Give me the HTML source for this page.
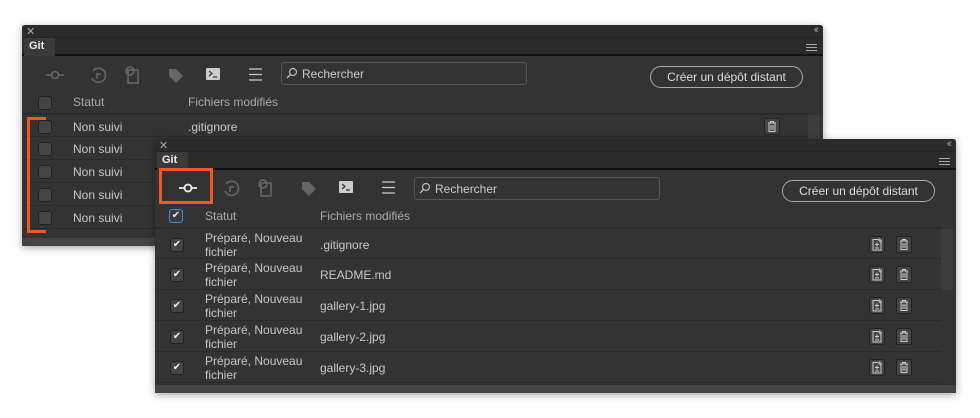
<!DOCTYPE html>
<html><head><meta charset="utf-8"><style>
*{margin:0;padding:0;box-sizing:border-box}
body{width:980px;height:418px;background:#fff;position:relative;overflow:hidden;font-family:"Liberation Sans",sans-serif;color:#c8c8c8;font-size:12px}
.p{position:absolute;background:#333;box-shadow:0 2px 8px rgba(0,0,0,.35);border-radius:3px 3px 0 0;overflow:hidden}
.a{position:absolute}
.tb{left:0;right:0;top:0;height:13px;background:#2b2b2b;border-bottom:1px solid #242424}
.tabrow{left:0;right:0;top:13px;height:18px;background:#2b2b2b;border-bottom:2px solid #111}
.tab{left:2px;top:0;width:31px;height:18px;background:#3a3a3a;color:#eee;font-weight:bold;font-size:11px;padding:2px 0 0 5px}
.x{left:4px;top:0;font-size:11px;color:#aaa}
.cc{right:6px;top:0;font-size:11px;line-height:11px;color:#999;letter-spacing:-2px}
.hm{right:6px;width:11px;height:7px;border-top:1px solid #aaa;border-bottom:1px solid #aaa}
.hm:after{content:"";position:absolute;left:0;right:0;top:2px;height:1px;background:#aaa}
.srch{border:1px solid #555;border-radius:3px;height:23px;font-size:12px;padding:4px 0 0 20px;color:#ccc}
.btn{border:1px solid #aaa;border-radius:12px;height:22px;font-size:12px;color:#ddd;text-align:center;padding-top:3px}
.cb{width:14px;height:14px;background:#444;border:1px solid #222;border-radius:3px;color:#eee;font-size:10px;line-height:12px;text-align:center}
.row{left:0;border-bottom:1px solid #2a2a2a}
.hd{color:#aaa}
.ic{width:16px;height:17px}
.or{position:absolute;background:#f05a22}
</style></head><body>

<svg width="0" height="0" style="position:absolute">
 <defs>
  <g id="trash"><rect x="0.5" y="0.5" width="15" height="16" rx="2" fill="#444" stroke="#222"/><g stroke="#ccc" stroke-width="1" fill="none"><path d="M4 5 h8 M6.5 5 V3.5 h3 V5 M5 5 v8.5 h6 V5 M7 7 v5 M9 7 v5"/></g></g>
  <g id="file"><rect x="0.5" y="0.5" width="15" height="16" rx="2" fill="#444" stroke="#222"/><g stroke="#ccc" stroke-width="1" fill="none"><path d="M4 3.5 h5 l3 3 V14 H4 Z M10 2.5 l3 3"/><path d="M8 6.5 v4 M6 8.5 h4 M6 12 h4"/></g></g>
 </defs>
</svg>

<!-- Panel 1 -->
<div class="p" style="left:22px;top:25px;width:801px;height:221px">
 <div class="a tb"><span class="a x">✕</span><span class="a cc">‹‹</span></div>
 <div class="a tabrow"><div class="a tab">Git</div><div class="a hm" style="top:6px"></div></div>
 <svg class="a" style="left:20px;top:40px" width="250" height="20" viewBox="0 0 250 20">
  <g fill="none" stroke="#666" stroke-width="1.6">
   <line x1="4" y1="10" x2="9" y2="10"/><circle cx="13" cy="10" r="3.5"/><line x1="17" y1="10" x2="22" y2="10"/>
   <path d="M51 6 A7 7 0 1 1 50 13"/><path d="M55 14 V9 h4"/>
   <rect x="86" y="5" width="10" height="13"/><circle cx="88" cy="6" r="4"/>
  </g>
  <path d="M127 4 h7 l7 7 -7 7 -7 -7z" fill="#666"/>
  <rect x="164" y="3" width="14" height="12" rx="1" fill="#ccc"/>
  <path d="M167 6 l3 2.5 -3 2.5 M171 12 h4" stroke="#333" stroke-width="1.2" fill="none"/>
  <g stroke="#ccc" stroke-width="1.3"><line x1="207" y1="4" x2="220" y2="4"/><line x1="207" y1="9.5" x2="220" y2="9.5"/><line x1="207" y1="15" x2="220" y2="15"/></g>
 </svg>
 <div class="a srch" style="left:259px;top:37px;width:246px">Rechercher</div>
 <svg class="a" style="left:264px;top:42px" width="12" height="12"><circle cx="7" cy="5" r="3.5" fill="none" stroke="#bbb" stroke-width="1.2"/><line x1="4.5" y1="7.5" x2="1" y2="11" stroke="#bbb" stroke-width="1.3"/></svg>
 <div class="a btn" style="left:628px;top:41px;width:153px">Créer un dépôt distant</div>
 <div class="a row" style="top:66px;height:23px;width:786px"><div class="a cb" style="left:16px;top:5px"></div><span class="a hd" style="left:51px;top:4px">Statut</span><span class="a hd" style="left:166px;top:4px">Fichiers modifiés</span></div>
 <div class="a row" style="top:89px;height:23px;width:786px;border-top:1px solid #2a2a2a"><div class="a cb" style="left:16px;top:5px"></div><span class="a" style="left:51px;top:5px">Non suivi</span><span class="a" style="left:166px;top:5px">.gitignore</span><svg class="a ic" style="left:742px;top:3px"><use href="#trash"/></svg></div>
 <div class="a row" style="top:112px;height:23px;width:786px"><div class="a cb" style="left:16px;top:5px"></div><span class="a" style="left:51px;top:5px">Non suivi</span></div>
 <div class="a row" style="top:135px;height:23px;width:786px"><div class="a cb" style="left:16px;top:5px"></div><span class="a" style="left:51px;top:5px">Non suivi</span></div>
 <div class="a row" style="top:158px;height:23px;width:786px"><div class="a cb" style="left:16px;top:5px"></div><span class="a" style="left:51px;top:5px">Non suivi</span></div>
 <div class="a row" style="top:181px;height:23px;width:786px"><div class="a cb" style="left:16px;top:5px"></div><span class="a" style="left:51px;top:5px">Non suivi</span></div>
 <div class="a" style="left:786px;top:90px;width:12px;height:120px;background:#3c3c3c"></div>
 <div class="a" style="left:0;right:0;top:213px;height:8px;background:#444"></div>
</div>
<div class="or" style="left:27px;top:117px;width:3px;height:116px"></div>
<div class="or" style="left:27px;top:117px;width:19px;height:3px"></div>
<div class="or" style="left:27px;top:230px;width:19px;height:3px"></div>

<!-- Panel 2 -->
<div class="p" style="left:155px;top:139px;width:801px;height:254px">
 <div class="a tb"><span class="a x">✕</span><span class="a cc">‹‹</span></div>
 <div class="a tabrow"><div class="a tab">Git</div><div class="a hm" style="top:6px"></div></div>
 <svg class="a" style="left:20px;top:39px" width="250" height="20" viewBox="0 0 250 20">
  <g fill="none" stroke="#666" stroke-width="1.6">
   <path d="M51 6 A7 7 0 1 1 50 13"/><path d="M55 14 V9 h4"/>
   <rect x="86" y="5" width="10" height="13"/><circle cx="88" cy="6" r="4"/>
  </g>
  <g fill="none" stroke="#eee" stroke-width="1.8"><line x1="4" y1="10" x2="9" y2="10"/><circle cx="13" cy="10" r="3.5"/><line x1="17" y1="10" x2="22" y2="10"/></g>
  <path d="M127 4 h7 l7 7 -7 7 -7 -7z" fill="#666"/>
  <rect x="164" y="3" width="14" height="12" rx="1" fill="#ccc"/>
  <path d="M167 6 l3 2.5 -3 2.5 M171 12 h4" stroke="#333" stroke-width="1.2" fill="none"/>
  <g stroke="#ccc" stroke-width="1.3"><line x1="207" y1="4" x2="220" y2="4"/><line x1="207" y1="9.5" x2="220" y2="9.5"/><line x1="207" y1="15" x2="220" y2="15"/></g>
 </svg>
 <div class="a srch" style="left:259px;top:38px;width:246px">Rechercher</div>
 <svg class="a" style="left:264px;top:43px" width="12" height="12"><circle cx="7" cy="5" r="3.5" fill="none" stroke="#bbb" stroke-width="1.2"/><line x1="4.5" y1="7.5" x2="1" y2="11" stroke="#bbb" stroke-width="1.3"/></svg>
 <div class="a btn" style="left:627px;top:41px;width:153px">Créer un dépôt distant</div>
 <div class="a row" style="top:66px;height:23px;width:786px"><div class="a cb" style="left:14px;top:4px;border:1px solid #3a8de0;background:#3a3a3a">✔</div><span class="a hd" style="left:50px;top:4px">Statut</span><span class="a hd" style="left:165px;top:4px">Fichiers modifiés</span></div>
 <div class="a" style="left:786px;top:90px;width:12px;height:61px;background:#3c3c3c"></div>
 <div class="a" style="left:0;right:0;top:246px;height:8px;background:#444"></div>
</div>
<div class="or" style="left:159px;top:168px;width:54px;height:3px"></div>
<div class="or" style="left:159px;top:201px;width:54px;height:3px"></div>
<div class="or" style="left:159px;top:168px;width:3px;height:36px"></div>
<div class="or" style="left:210px;top:168px;width:3px;height:36px"></div>

<div class="a" style="left:155px;top:228px">
 <div class="a row" style="top:0;height:31px;width:786px;border-top:1px solid #2a2a2a"><div class="a cb" style="left:15px;top:9px">✔</div><span class="a" style="left:50px;top:2px;line-height:14px">Préparé, Nouveau<br>fichier</span><span class="a" style="left:165px;top:9px">.gitignore</span><svg class="a ic" style="left:714px;top:7px"><use href="#file"/></svg><svg class="a ic" style="left:741px;top:7px"><use href="#trash"/></svg></div>
 <div class="a row" style="top:31px;height:31px;width:786px"><div class="a cb" style="left:15px;top:9px">✔</div><span class="a" style="left:50px;top:2px;line-height:14px">Préparé, Nouveau<br>fichier</span><span class="a" style="left:165px;top:9px">README.md</span><svg class="a ic" style="left:714px;top:7px"><use href="#file"/></svg><svg class="a ic" style="left:741px;top:7px"><use href="#trash"/></svg></div>
 <div class="a row" style="top:62px;height:31px;width:786px"><div class="a cb" style="left:15px;top:9px">✔</div><span class="a" style="left:50px;top:2px;line-height:14px">Préparé, Nouveau<br>fichier</span><span class="a" style="left:165px;top:9px">gallery-1.jpg</span><svg class="a ic" style="left:714px;top:7px"><use href="#file"/></svg><svg class="a ic" style="left:741px;top:7px"><use href="#trash"/></svg></div>
 <div class="a row" style="top:93px;height:31px;width:786px"><div class="a cb" style="left:15px;top:9px">✔</div><span class="a" style="left:50px;top:2px;line-height:14px">Préparé, Nouveau<br>fichier</span><span class="a" style="left:165px;top:9px">gallery-2.jpg</span><svg class="a ic" style="left:714px;top:7px"><use href="#file"/></svg><svg class="a ic" style="left:741px;top:7px"><use href="#trash"/></svg></div>
 <div class="a row" style="top:124px;height:31px;width:786px"><div class="a cb" style="left:15px;top:9px">✔</div><span class="a" style="left:50px;top:2px;line-height:14px">Préparé, Nouveau<br>fichier</span><span class="a" style="left:165px;top:9px">gallery-3.jpg</span><svg class="a ic" style="left:714px;top:7px"><use href="#file"/></svg><svg class="a ic" style="left:741px;top:7px"><use href="#trash"/></svg></div>
</div>
</body></html>
